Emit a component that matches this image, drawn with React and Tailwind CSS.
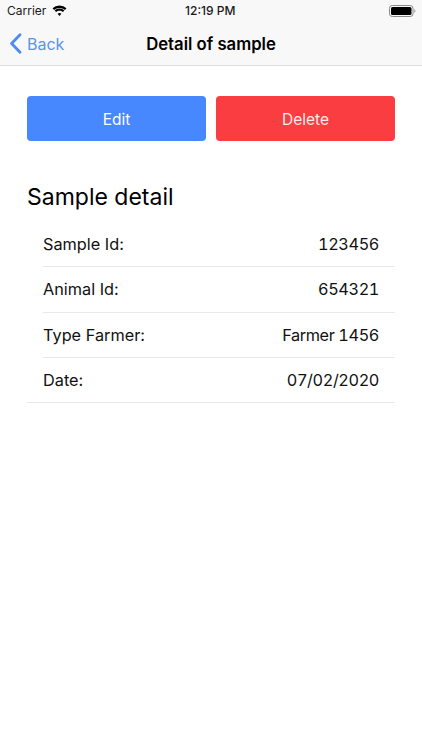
import React from 'react';

const rows = [
  { label: 'Sample Id:', value: '123456' },
  { label: 'Animal Id:', value: '654321' },
  { label: 'Type Farmer:', value: 'Farmer 1456' },
  { label: 'Date:', value: '07/02/2020', last: true },
];

const App = () => {
  return (
    <div className="w-[422px] h-[750px] bg-white text-black overflow-hidden font-['Inter',sans-serif]">
      {/* Status + nav bar */}
      <div className="h-[66px] bg-[#f8f8f8] border-b border-[#dfdfdf]">
        <div className="h-[22px] flex items-center justify-between pl-[7px] pr-[6px] relative">
          <div className="flex items-center gap-[6px]">
            <span className="text-[12px] leading-[22px] text-[#1a1a1a]">Carrier</span>
            <svg width="15" height="12" viewBox="0 0 15 11">
              <path d="M7.5 2.4c2.1 0 4 .8 5.4 2.1l1.6-1.7A10 10 0 0 0 7.5 0 10 10 0 0 0 .5 2.8l1.6 1.7a7.9 7.9 0 0 1 5.4-2.1z" fill="#000" />
              <path d="M7.5 5.2c1.3 0 2.5.5 3.4 1.3l1.5-1.6a7 7 0 0 0-9.8 0l1.5 1.6c.9-.8 2.1-1.3 3.4-1.3z" fill="#000" />
              <path d="M7.5 7.5c-.7 0-1.4.3-1.9.8l1.9 2.2 1.9-2.2c-.5-.5-1.2-.8-1.9-.8z" fill="#000" />
            </svg>
          </div>
          <span className="absolute left-[185px] text-[12px] leading-[22px] font-medium text-[#1a1a1a]">12:19 PM</span>
          <svg width="27" height="12" viewBox="0 0 27 12">
            <rect x="0.5" y="0.5" width="23.5" height="11" rx="2.8" fill="none" stroke="#8a8a8a" />
            <rect x="2" y="2" width="20.5" height="8" rx="1.5" fill="#000" />
            <path d="M25.2 4.2c.8.2 1.3.9 1.3 1.8s-.5 1.6-1.3 1.8z" fill="#a8a8a8" />
          </svg>
        </div>
        <div className="h-[43px] flex items-center relative">
          <div className="flex items-center pl-[9px] gap-[5px] text-[#4a8cf0]">
            <svg width="13" height="21" viewBox="0 0 13 21">
              <path d="M11 1.8 2.6 10.5 11 19.2" fill="none" stroke="#4a8cf0" strokeWidth="2.8" strokeLinecap="round" strokeLinejoin="round" />
            </svg>
            <span className="text-[16px] leading-[22px] text-[#5c94e8]">Back</span>
          </div>
          <span className="absolute inset-x-0 text-center text-[16.7px] leading-[22px] font-semibold">Detail of sample</span>
        </div>
      </div>

      {/* Actions */}
      <div className="px-[27px] pt-[30px] flex gap-[10px]">
        <button className="w-[179px] h-[45px] pt-[2px] bg-[#4787ff] rounded-[4px] text-white text-[15.5px]">Edit</button>
        <button className="w-[179px] h-[45px] pt-[2px] bg-[#f93d41] rounded-[4px] text-[#ffecec] text-[15.5px]">Delete</button>
      </div>

      {/* Detail */}
      <div className="px-[27px] mt-[41px]">
        <h2 className="text-[23px] leading-[30px] font-normal">Sample detail</h2>
        <div className="mt-[10px]">
          {rows.map((row) => (
            <div key={row.label} className={row.last ? 'border-b border-[#e8e8e8]' : 'pl-[16px]'}>
              <div className={row.last ? 'pl-[16px]' : 'border-b border-[#e8e8e8]'}>
                <div className="h-[44.3px] flex items-center justify-between pr-[16px] text-[16.3px]">
                  <span className="text-[#111]">{row.label}</span>
                  <span className="text-[#111] tabular-nums tracking-[-0.4px]">{row.value}</span>
                </div>
              </div>
            </div>
          ))}
        </div>
      </div>
    </div>
  );
};

export default App;
